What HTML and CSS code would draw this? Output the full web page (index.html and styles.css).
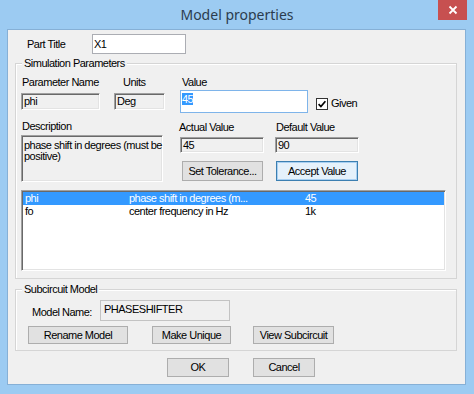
FILE: index.html
```html
<!DOCTYPE html>
<html lang="en">
<head>
<meta charset="utf-8">
<title>Model properties</title>
<link rel="stylesheet" href="styles.css">
</head>
<body>
<div class="window">
  <div class="titlebar">
    <span class="title">Model properties</span>
    <button class="close" aria-label="Close">
      <svg width="10" height="10" viewBox="0 0 10 10"><path d="M1.5 1.5 L8.5 8.5 M8.5 1.5 L1.5 8.5" stroke="#fff" stroke-width="1.8" fill="none"/></svg>
    </button>
  </div>
  <div class="client">
    <div class="part-row">
      <span class="part-label">Part Title</span>
      <div class="edit part-edit">X1</div>
    </div>

    <div class="group sim">
      <div class="legend">Simulation Parameters</div>
      <div class="sim-top">
        <div class="col-left">
          <div class="lbl-row"><span class="lbl-name">Parameter Name</span><span class="lbl-units">Units</span></div>
          <div class="ro-row"><div class="ro ro-name">phi</div><div class="ro ro-units">Deg</div></div>
          <div class="lbl-desc">Description</div>
          <div class="ro ro-desc">phase shift in degrees (must be<br>positive)</div>
        </div>
        <div class="col-right">
          <div class="lbl-value">Value</div>
          <div class="value-row">
            <div class="edit value-edit"><span class="sel">45</span></div>
            <div class="given">
              <svg class="check" width="12" height="12" viewBox="0 0 12 12"><rect x="0.5" y="0.5" width="11" height="11" fill="#fff" stroke="#333"/><path d="M2.6 6.2 L4.9 8.6 L9.4 3.2" stroke="#000" stroke-width="1.7" fill="none"/></svg>
              <span>Given</span>
            </div>
          </div>
          <div class="lbl-row2"><span class="lbl-actual">Actual Value</span><span class="lbl-default">Default Value</span></div>
          <div class="ro-row2"><div class="ro ro-small">45</div><div class="ro ro-small">90</div></div>
          <div class="btn-row"><button class="btn btn-tol">Set Tolerance...</button><button class="btn btn-accept">Accept Value</button></div>
        </div>
      </div>
      <div class="list">
        <div class="list-row selected"><span class="c1">phi</span><span class="c2">phase shift in degrees (m...</span><span class="c3">45</span></div>
        <div class="list-row"><span class="c1">fo</span><span class="c2">center frequency in Hz</span><span class="c3">1k</span></div>
      </div>
    </div>

    <div class="group sub">
      <div class="legend">Subcircuit Model</div>
      <div class="model-row">
        <span class="model-label">Model Name:</span>
        <div class="model-box">PHASESHIFTER</div>
      </div>
      <div class="sub-btns">
        <button class="btn btn-rename">Rename Model</button>
        <button class="btn btn-unique">Make Unique</button>
        <button class="btn btn-view">View Subcircuit</button>
      </div>
    </div>

    <div class="dlg-buttons">
      <button class="btn btn-dlg">OK</button>
      <button class="btn btn-dlg">Cancel</button>
    </div>
  </div>
</div>
</body>
</html>
```

FILE: styles.css
```css
* { box-sizing: border-box; }
html, body { margin: 0; padding: 0; }
body {
  width: 474px;
  height: 394px;
  overflow: hidden;
  background: #9ccbf2;
  font-family: "Liberation Sans", Arial, sans-serif;
  font-size: 11px;
  letter-spacing: -0.5px;
  color: #000;
}
.window {
  width: 474px;
  height: 394px;
  display: flex;
  flex-direction: column;
  background: #9ccbf2;
}
.titlebar {
  position: relative;
  flex: none;
  height: 29px;
  display: flex;
  justify-content: center;
  align-items: center;
  padding-bottom: 1px;
}
.title {
  font-family: "Noto Sans", sans-serif;
  font-size: 14px;
  letter-spacing: 0;
  color: #2b3c4e;
}
.close {
  position: absolute;
  top: 0;
  right: 7px;
  width: 29px;
  height: 20px;
  padding: 0;
  border: 0;
  background: #c75050;
  display: flex;
  align-items: center;
  justify-content: center;
}
.client {
  flex: none;
  margin-left: 7px;
  width: 459px;
  height: 356px;
  background: #f0f0f0;
  border: 1px solid #86b0d6;
  padding: 4px 0 0 7px;
}

/* part title */
.part-row {
  display: flex;
  align-items: center;
  height: 20px;
  margin-left: 12px;
}
.part-label { width: 65px; line-height: 13px; padding-top: 1px; }
.edit {
  background: #fff;
  border: 1px solid #abadb3;
}
.part-edit {
  width: 94px;
  height: 20px;
  line-height: 18px;
  padding: 0 1px;
}

/* group boxes */
.group {
  width: 442px;
  border: 1px solid #d5d5d5;
  box-shadow: inset 1px 1px 0 #fff;
  padding: 0 0 0 5px;
}
.legend {
  width: fit-content;
  margin: -7px 0 0 1px;
  padding: 0 2px;
  line-height: 13px;
  background: #f0f0f0;
}
.sim { margin-top: 9px; height: 216px; }
.sub { margin-top: 10px; height: 62px; }

.sim-top {
  display: flex;
  gap: 15px;
  margin-top: 6px;
}
.col-left { width: 144px; display: flex; flex-direction: column; }
.col-right { display: flex; flex-direction: column; }

.lbl-row { display: flex; line-height: 13px; }
.lbl-name { width: 93px; padding-left: 1px; }
.lbl-units { padding-left: 9px; }

.ro {
  background: #f0f0f0;
  border: 1px solid;
  border-color: #a0a0a0 #ffffff #ffffff #a0a0a0;
  box-shadow: inset 1px 1px 0 #696969, inset -1px -1px 0 #e3e3e3;
  padding: 0 2px;
  line-height: 13px;
  white-space: nowrap;
}
.ro-row { display: flex; gap: 14px; margin-top: 4px; }
.ro-name { width: 79px; height: 17px; padding-top: 1px; }
.ro-units { width: 51px; height: 17px; padding-top: 1px; }
.lbl-desc { margin-top: 10px; line-height: 13px; padding-left: 1px; }
.ro-desc {
  margin-top: 2px;
  width: 142px;
  height: 47px;
  line-height: 11px;
  padding-top: 4px;
}

.lbl-value { line-height: 13px; padding-left: 2px; }
.value-row { display: flex; align-items: center; height: 23px; margin-top: 1px; }
.value-edit {
  width: 128px;
  height: 23px;
  border-color: #7eb4ea;
  padding: 2px 1px 0;
  line-height: 12px;
}
.sel { background: #3399ff; color: #fff; }
.given {
  display: flex;
  align-items: center;
  gap: 3px;
  margin-left: 8px;
  margin-top: 4px;
  line-height: 13px;
}
.check { display: block; flex: none; }

.lbl-row2 { display: flex; margin-top: 8px; line-height: 13px; }
.lbl-actual { width: 96px; margin-left: -1px; }
.lbl-default { padding-left: 1px; }
.ro-row2 { display: flex; gap: 11px; margin-top: 3px; }
.ro-small { width: 84px; height: 16px; padding-top: 1px; }

.btn {
  font: inherit;
  letter-spacing: inherit;
  color: #000;
  background: #e1e1e1;
  border: 1px solid #adadad;
  border-radius: 0;
  padding: 0;
  line-height: 13px;
  text-align: center;
}
.btn-row { display: flex; gap: 13px; margin-top: 8px; padding-left: 2px; }
.btn-tol { width: 81px; height: 20px; }
.btn-accept { width: 82px; height: 20px; background: #e5f1fb; border-color: #3c7fb1; box-shadow: inset 0 0 0 1px #a9d0f2; }

/* list */
.list {
  margin-top: 8px;
  width: 425px;
  height: 81px;
  background: #fff;
  border: 1px solid;
  border-color: #a0a0a0 #ffffff #ffffff #a0a0a0;
  box-shadow: inset 1px 1px 0 #696969, inset -1px -1px 0 #e3e3e3;
  padding: 1px;
}
.list-row {
  display: flex;
  height: 13px;
  line-height: 13px;
  padding-left: 2px;
  white-space: nowrap;
}
.list-row.selected { background: #3399ff; color: #fff; }
.c1 { width: 104px; }
.c2 { width: 176px; }

/* subcircuit */
.model-row {
  display: flex;
  align-items: center;
  height: 21px;
  margin-top: 4px;
  padding-left: 11px;
}
.model-label { width: 68px; line-height: 13px; padding-top: 3px; }
.model-box {
  width: 130px;
  height: 21px;
  border: 1px solid #c3c3c3;
  background: #f0f0f0;
  padding: 2px 3px 0;
  line-height: 13px;
}
.sub-btns { display: flex; margin-top: 5px; padding-left: 7px; }
.sub-btns .btn { height: 18px; }
.btn-rename { width: 100px; }
.btn-unique { width: 79px; margin-left: 24px; }
.btn-view { width: 81px; margin-left: 22px; }

.dlg-buttons {
  display: flex;
  gap: 24px;
  margin-top: 7px;
  padding-left: 152px;
}
.btn-dlg { width: 62px; height: 19px; }
```
